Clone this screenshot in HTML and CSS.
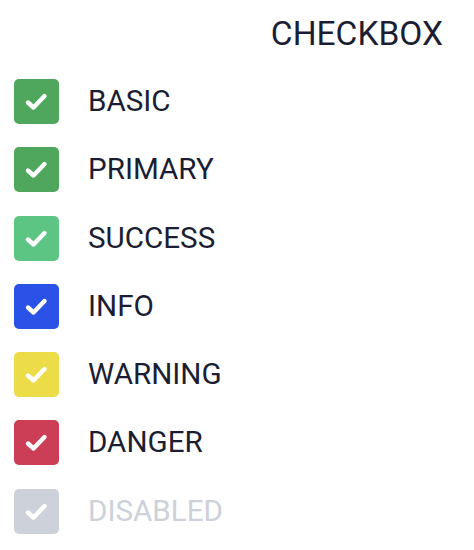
FILE: index.html
```html
<!DOCTYPE html>
<html>
<head>
<meta charset="utf-8">
<link rel="stylesheet" href="styles.css">
</head>
<body>
<div class="page">
  <h1 class="title">CHECKBOX</h1>
  <ul class="list">
    <li class="item"><span class="box basic"><svg viewBox="0 0 45 45"><path d="M14 23.5l5.5 5 11-11.5"/></svg></span><span class="label">BASIC</span></li>
    <li class="item"><span class="box primary"><svg viewBox="0 0 45 45"><path d="M14 23.5l5.5 5 11-11.5"/></svg></span><span class="label">PRIMARY</span></li>
    <li class="item"><span class="box success"><svg viewBox="0 0 45 45"><path d="M14 23.5l5.5 5 11-11.5"/></svg></span><span class="label">SUCCESS</span></li>
    <li class="item"><span class="box info"><svg viewBox="0 0 45 45"><path d="M14 23.5l5.5 5 11-11.5"/></svg></span><span class="label">INFO</span></li>
    <li class="item"><span class="box warning"><svg viewBox="0 0 45 45"><path d="M14 23.5l5.5 5 11-11.5"/></svg></span><span class="label">WARNING</span></li>
    <li class="item"><span class="box danger"><svg viewBox="0 0 45 45"><path d="M14 23.5l5.5 5 11-11.5"/></svg></span><span class="label">DANGER</span></li>
    <li class="item disabled"><span class="box off"><svg viewBox="0 0 45 45"><path d="M14 23.5l5.5 5 11-11.5"/></svg></span><span class="label">DISABLED</span></li>
  </ul>
</div>
</body>
</html>
```
FILE: styles.css
```css
html, body {
  margin: 0;
  padding: 0;
  background: #ffffff;
}
.page {
  padding: 14px 31px 0 14px;
  font-family: Roboto, "Liberation Sans", sans-serif;
  color: #1b1e33;
}
.title {
  margin: 0;
  text-align: right;
  font-size: 33.5px;
  font-weight: 400;
  line-height: 40px;
}
.list {
  list-style: none;
  margin: 25px 0 0 0;
  padding: 0;
  display: flex;
  flex-direction: column;
  gap: 23.3px;
}
.item {
  display: flex;
  align-items: center;
  height: 45px;
}
.box {
  width: 45px;
  height: 45px;
  border-radius: 5px;
  display: flex;
  flex: none;
}
.box svg {
  width: 45px;
  height: 45px;
  fill: none;
  stroke: #ffffff;
  stroke-width: 4.4;
  stroke-linecap: round;
  stroke-linejoin: round;
}
.label {
  margin-left: 29px;
  font-size: 29.6px;
  line-height: 45px;
}
.basic { background: #4ea75c; }
.primary { background: #4ea75c; }
.success { background: #5dc583; }
.info { background: #2b52e6; }
.warning { background: #ecdc47; }
.danger { background: #cc3d56; }
.off { background: #cdd1da; }
.disabled .label { color: #cdd1da; }
```
